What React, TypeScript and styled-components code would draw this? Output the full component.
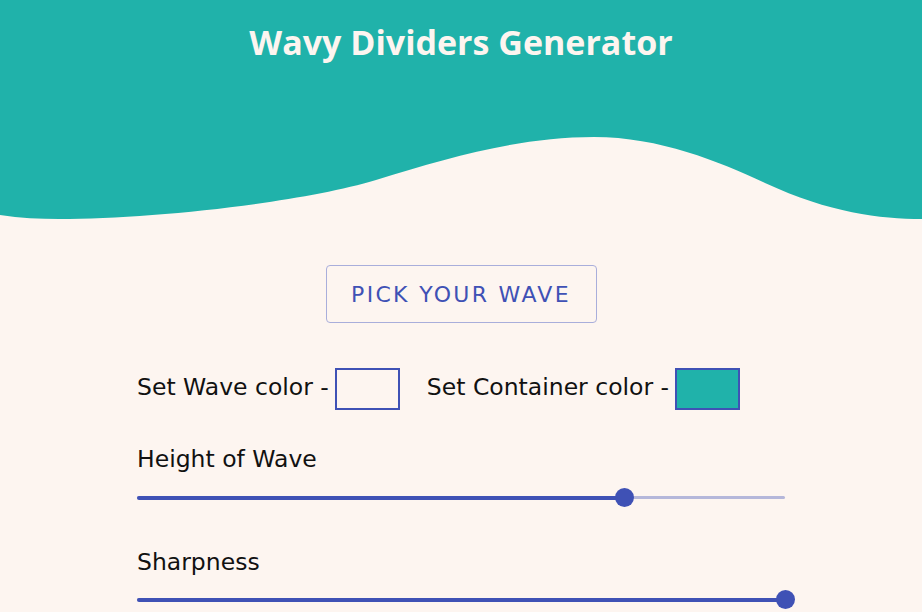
import React from 'react';
import styled, { createGlobalStyle } from 'styled-components';

const GlobalStyle = createGlobalStyle`
  html, body {
    margin: 0;
    padding: 0;
    background: #fdf5f0;
    font-family: "DejaVu Sans", "Liberation Sans", sans-serif;
    color: #111;
  }
`;

const Page = styled.div`
  width: 100%;
  min-height: 612px;
  overflow: hidden;
`;

const Header = styled.header`
  background: #20b2aa;
  height: 137px;
  display: flex;
  justify-content: center;
`;

const Title = styled.h1`
  margin: 21px 0 0;
  font-family: "Open Sans", "Liberation Sans", sans-serif;
  font-size: 34px;
  font-weight: 700;
  color: #fdf5f0;
  line-height: 42px;
`;

const Wave = styled.svg`
  display: block;
  width: 100%;
  height: 84px;
`;

const Content = styled.main`
  width: 648px;
  margin: 0 auto;
  display: flex;
  flex-direction: column;
  padding-top: 44px;
`;

const PickButton = styled.button`
  align-self: center;
  width: 271px;
  height: 58px;
  padding: 0;
  border: 1px solid #a9aedb;
  border-radius: 4px;
  background: transparent;
  color: #3f51b5;
  font-family: inherit;
  font-size: 22px;
  letter-spacing: 2.3px;
  text-transform: uppercase;
  cursor: pointer;
`;

const ColorRow = styled.div`
  display: flex;
  align-items: center;
  gap: 27px;
  margin-top: 45px;
`;

const ColorField = styled.label`
  display: flex;
  align-items: center;
  gap: 6px;
`;

const ColorText = styled.span`
  font-size: 23.5px;
  line-height: 30px;
  margin-bottom: 5px;
`;

const Swatch = styled.span<{ $color: string }>`
  display: inline-block;
  width: 61px;
  height: 38px;
  border: 2px solid #3f51b5;
  background: ${({ $color }) => $color};
`;

const SliderBlock = styled.div<{ $top: number }>`
  margin-top: ${({ $top }) => $top}px;
  display: flex;
  flex-direction: column;
`;

const SliderLabel = styled.div`
  font-size: 23.5px;
  line-height: 30px;
`;

const SliderRoot = styled.div<{ $gap: number }>`
  position: relative;
  height: 20px;
  margin-top: ${({ $gap }) => $gap}px;
`;

const Rail = styled.div`
  position: absolute;
  left: 0;
  right: 0;
  top: 9px;
  height: 3px;
  border-radius: 2px;
  background: #3f51b5;
  opacity: 0.38;
`;

const Track = styled.div`
  position: absolute;
  left: 0;
  top: 8.5px;
  height: 4px;
  border-radius: 2px;
  background: #3f51b5;
`;

const Thumb = styled.div`
  position: absolute;
  top: 1px;
  width: 19px;
  height: 19px;
  margin-left: -9.5px;
  border-radius: 50%;
  background: #3f51b5;
`;

const Slider = ({ value, gap }: { value: number; gap: number }) => (
  <SliderRoot $gap={gap}>
    <Rail />
    <Track style={{ width: `${value}%` }} />
    <Thumb style={{ left: `${value}%` }} />
  </SliderRoot>
);

export default function App() {
  return (
    <Page>
      <GlobalStyle />
      <Header>
        <Title>Wavy Dividers Generator</Title>
      </Header>
      <Wave viewBox="0 0 922 84" preserveAspectRatio="none">
        <path
          fill="#20b2aa"
          d="M0 78 C 20 81, 40 82, 59 82 C 150 82, 300 66, 376 43 C 450 20, 520 0, 594 0 C 660 0, 720 25, 765 46 C 830 76, 880 82, 922 82 V0 H0 Z"
        />
      </Wave>
      <Content>
        <PickButton>Pick your wave</PickButton>
        <ColorRow>
          <ColorField>
            <ColorText>Set Wave color -</ColorText>
            <Swatch $color="#fdf5f0" />
          </ColorField>
          <ColorField>
            <ColorText>Set Container color -</ColorText>
            <Swatch $color="#20b2aa" />
          </ColorField>
        </ColorRow>
        <SliderBlock $top={34}>
          <SliderLabel>Height of Wave</SliderLabel>
          <Slider value={75.3} gap={13} />
        </SliderBlock>
        <SliderBlock $top={40}>
          <SliderLabel>Sharpness</SliderLabel>
          <Slider value={100} gap={12} />
        </SliderBlock>
      </Content>
    </Page>
  );
}
